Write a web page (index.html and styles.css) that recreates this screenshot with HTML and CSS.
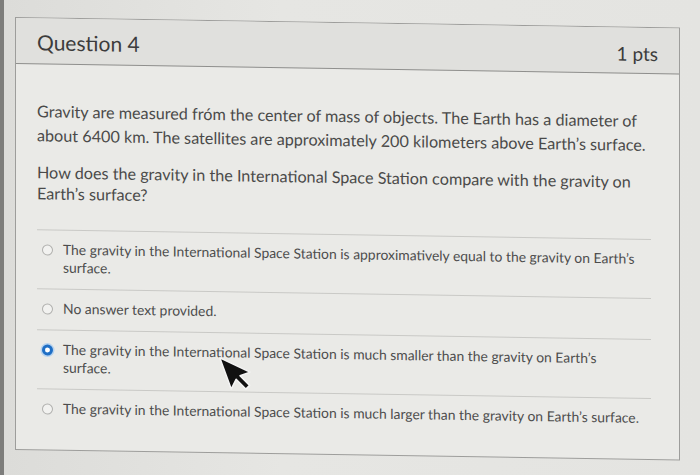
FILE: index.html
```html
<!DOCTYPE html>
<html lang="en">
<head>
<meta charset="utf-8">
<title>Question 4</title>
<link rel="stylesheet" href="styles.css">
</head>
<body>
<div class="screen">
  <div class="card">
    <div class="card-header">
      <span class="q-title">Question 4</span>
      <span class="q-pts">1 pts</span>
    </div>
    <div class="card-body">
      <p class="q-text">Gravity are measured fr&#243;m the center of mass of objects. The Earth has a diameter of about 6400 km. The satellites are approximately 200 kilometers above Earth&#8217;s surface.</p>
      <p class="q-text q-ask">How does the gravity in the International Space Station compare with the gravity on Earth&#8217;s surface?</p>
      <ul class="answers">
        <li class="answer"><span class="radio"></span><span class="a-text">The gravity in the International Space Station is approximatively equal to the gravity on Earth&#8217;s surface.</span></li>
        <li class="answer"><span class="radio"></span><span class="a-text">No answer text provided.</span></li>
        <li class="answer"><span class="radio checked"></span><span class="a-text">The gravity in the International Space Station is much smaller than the gravity on Earth&#8217;s surface.</span></li>
        <li class="answer"><span class="radio"></span><span class="a-text">The gravity in the International Space Station is much larger than the gravity on Earth&#8217;s surface.</span></li>
      </ul>
    </div>
  </div>
  <svg class="cursor" width="30" height="42" viewBox="0 0 13 19" aria-hidden="true">
    <path d="M1 1 L1 16 L4.6 12.6 L7.2 18.3 L9.4 17.3 L6.8 11.7 L11.6 11.7 Z" fill="#111" stroke="#f4f4f4" stroke-width="0.7" stroke-linejoin="round"/>
  </svg>
</div>
</body>
</html>
```

FILE: styles.css
```css
html, body {
  margin: 0;
  padding: 0;
}
body {
  background: #e2e2df;
  font-family: Lato, "Open Sans", "Liberation Sans", sans-serif;
  color: #4b4b4b;
}
.screen {
  position: relative;
  width: 700px;
  height: 475px;
  box-sizing: border-box;
  padding: 17px 0 0 11px;
  border-left: 4px solid #7d7d7b;
  background: linear-gradient(90deg, #dcdcd9 0%, #e6e6e3 40%, #e4e4e1 100%);
  overflow: hidden;
}
.card {
  width: 665px;
  height: 433px;
  box-sizing: border-box;
  border: 1px solid #9d9d9b;
  background: #eaeae7;
  transform-origin: 0 0;
  transform: skewY(0.9deg);
}
.card-header {
  height: 46px;
  box-sizing: border-box;
  display: flex;
  align-items: center;
  justify-content: space-between;
  padding: 1px 21px 0 21px;
  background: #e0e0dd;
  border-bottom: 1px solid #8f8f8d;
  color: #3c3c3c;
}
.q-title {
  font-size: 21px;
}
.q-pts {
  font-size: 19px;
  margin-top: 4px;
}
.card-body {
  padding: 35px 21px 0 21px;
}
.q-text {
  margin: 0;
  font-size: 16.2px;
  line-height: 24px;
  color: #4a4a4a;
}
.q-ask {
  margin-top: 14px;
  line-height: 21px;
}
.answers {
  list-style: none;
  margin: 26px 0 0 0;
  padding: 0;
  width: 614px;
}
.answer {
  display: flex;
  align-items: flex-start;
  gap: 10px;
  padding: 10px 8px 12px 5px;
  border-top: 1px solid #c9c9c6;
  font-size: 13.9px;
  line-height: 18px;
  color: #4d4d4d;
}
.radio {
  flex: none;
  width: 11px;
  height: 11px;
  margin-top: 4px;
  box-sizing: border-box;
  border: 1px solid #b0b0ae;
  border-radius: 50%;
  background: #f2f2f0;
}
.radio.checked {
  border: 3.5px solid #1f6fc5;
  background: #ffffff;
  box-shadow: 0 0 0 1.5px #b8d3ee;
}
.a-text {
  flex: 1;
}
.cursor {
  position: absolute;
  left: 213px;
  top: 356px;
  transform: rotate(-20deg);
  transform-origin: 2px 2px;
}
```
